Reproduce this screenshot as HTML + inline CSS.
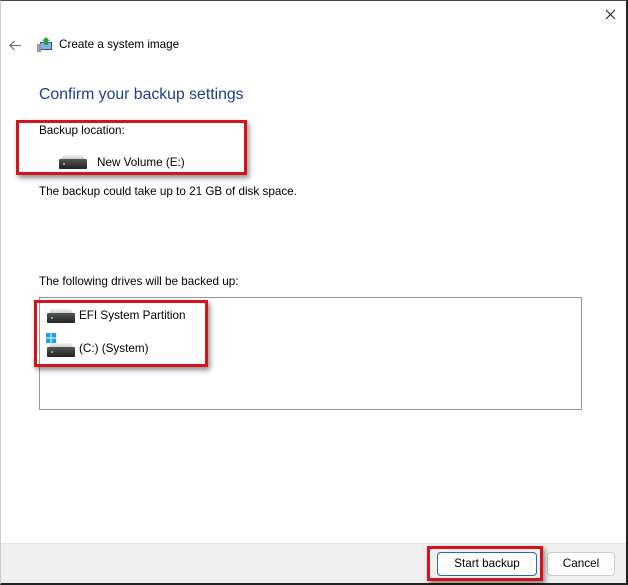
<!DOCTYPE html>
<html><head><meta charset="utf-8"><style>
*{margin:0;padding:0;box-sizing:border-box}
body{width:628px;height:585px;background:#fff;font-family:"Segoe UI","Liberation Sans",sans-serif;font-size:11.7px;color:#000;position:relative;overflow:hidden}
.win{position:absolute;left:0;top:0;width:628px;height:585px;border:1px solid #2a2a2a;border-top-color:#444;border-left-color:#ccc;border-right:2px solid #222;border-bottom:2px solid #222}
.t{position:absolute;white-space:nowrap}
.drive{position:absolute;width:28px;height:10px;background:linear-gradient(#555,#222);border-radius:1px}
.drive:before{content:"";position:absolute;left:2px;top:-4px;width:24px;height:4px;background:linear-gradient(#f4f4f4,#ccc);clip-path:polygon(10% 0,90% 0,100% 100%,0 100%)}
.drive:after{content:"";position:absolute;left:4px;top:4px;width:2px;height:2px;background:#5c5}
.red{position:absolute;border:3px solid #d4141c;box-shadow:2px 3px 5px rgba(0,0,0,.45)}
.foot{position:absolute;left:1px;top:543px;width:625px;height:40px;background:#f0f0f0;border-top:1px solid #e4e4e4}
.btn{position:absolute;height:24px;border:1px solid #ccc;border-radius:4px;background:#fdfdfd;text-align:center;line-height:22px;font-size:11.7px}
</style></head><body>
<div class="win"></div>
<svg style="position:absolute;left:605px;top:9px" width="11" height="11"><path d="M1 1L10 10M10 1L1 10" stroke="#222" stroke-width="1.1"/></svg>
<svg style="position:absolute;left:9px;top:40px" width="13" height="11"><path d="M1 5.5H12M5.5 1L1 5.5L5.5 10" stroke="#666" stroke-width="1.1" fill="none"/></svg>
<svg style="position:absolute;left:37px;top:36px" width="17" height="17" viewBox="0 0 17 17"><rect x="3" y="6" width="12" height="8" fill="#2b4f9e"/><rect x="4" y="7" width="10" height="6" fill="#7fb0e8"/><rect x="0" y="8" width="4" height="8" fill="#999"/><path d="M9 1l4 4h-2v4H7V5H5z" fill="#3a9a3a"/></svg>
<div class="t" style="left:59px;top:38px">Create a system image</div>
<div class="t" style="left:39px;top:86px;font-size:15.8px;color:#1e3f8a">Confirm your backup settings</div>
<div class="t" style="left:39px;top:124px">Backup location:</div>
<div class="drive" style="left:59px;top:159px"></div>
<div class="t" style="left:97px;top:156px">New Volume (E:)</div>
<div class="red" style="left:16px;top:120px;width:231px;height:55px"></div>
<div class="t" style="left:39px;top:185px">The backup could take up to 21 GB of disk space.</div>
<div class="t" style="left:39px;top:275px">The following drives will be backed up:</div>
<div style="position:absolute;left:39px;top:297px;width:543px;height:113px;border:1px solid #999"></div>
<div class="drive" style="left:47px;top:313px"></div>
<div class="t" style="left:79px;top:309px">EFI System Partition</div>
<svg style="position:absolute;left:46px;top:333px" width="10" height="10"><rect x="0" y="0" width="4.5" height="4.5" fill="#1aa0e8"/><rect x="5.5" y="0" width="4.5" height="4.5" fill="#1aa0e8"/><rect x="0" y="5.5" width="4.5" height="4.5" fill="#1aa0e8"/><rect x="5.5" y="5.5" width="4.5" height="4.5" fill="#1aa0e8"/></svg>
<div class="drive" style="left:47px;top:347px"></div>
<div class="t" style="left:79px;top:342px">(C:) (System)</div>
<div class="red" style="left:34px;top:300px;width:174px;height:67px"></div>
<div class="foot"></div>
<div class="btn" style="left:437px;top:552px;width:100px;border-color:#2a6aa8">Start backup</div>
<div class="btn" style="left:547px;top:552px;width:68px">Cancel</div>
<div class="red" style="left:427px;top:546px;width:116px;height:35px"></div>
</body></html>
